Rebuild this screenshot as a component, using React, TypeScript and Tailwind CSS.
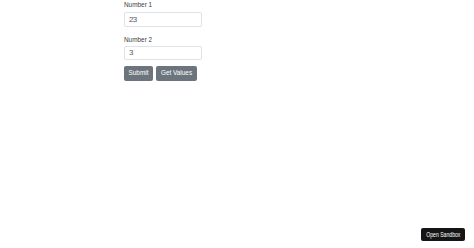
import React from "react";

const font = { fontFamily: '"Liberation Sans", Arial, sans-serif' };

export default function App() {
  return (
    <div className="relative w-[474px] h-[248px] bg-white" style={font}>
      <div className="flex flex-col items-start pl-[124px]">
        <label className="text-[8px] leading-[9px] text-[#3a3d40]">
          <span className="inline-block whitespace-nowrap scale-x-[0.8] origin-left">Number 1</span>
        </label>
        <input
          defaultValue="23"
          style={font}
          className="mt-[3px] w-[78px] h-[14.5px] border border-[#dfe2e6] rounded-[2px] px-[4px] text-[8px] tracking-[-0.8px] text-[#55595e] outline-none"
        />
        <label className="mt-[8px] text-[8px] leading-[9px] text-[#3a3d40]">
          <span className="inline-block whitespace-nowrap scale-x-[0.8] origin-left">Number 2</span>
        </label>
        <input
          defaultValue="3"
          style={font}
          className="mt-[2px] w-[78px] h-[14.5px] border border-[#dfe2e6] rounded-[2px] px-[4px] text-[8px] tracking-[-0.8px] text-[#55595e] outline-none"
        />
        <div className="mt-[6px] flex gap-[2.5px]">
          <button style={font} className="h-[14.5px] w-[29px] bg-[#6c757d] text-white text-[8px] rounded-[2px] flex items-center justify-center">
            <span className="inline-block whitespace-nowrap scale-x-[0.8] origin-center">Submit</span>
          </button>
          <button style={font} className="h-[14.5px] w-[41px] bg-[#6c757d] text-white text-[8px] rounded-[2px] flex items-center justify-center">
            <span className="inline-block whitespace-nowrap scale-x-[0.8] origin-center">Get Values</span>
          </button>
        </div>
      </div>
      <div className="absolute left-[421px] top-[228px] w-[44px] h-[13px] bg-[#151515] rounded-[2px] flex items-center justify-center text-white text-[6.4px]">
        <span className="inline-block whitespace-nowrap scale-x-[0.8] origin-center">Open Sandbox</span>
      </div>
    </div>
  );
}
